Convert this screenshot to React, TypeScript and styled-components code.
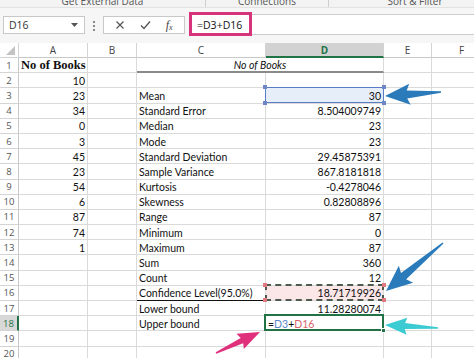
import React from 'react';
import styled, { createGlobalStyle, css } from 'styled-components';

const Global = createGlobalStyle`
  html, body { margin: 0; padding: 0; background: #fff; }
  body { width: 474px; height: 358px; overflow: hidden; }
`;

const Page = styled.div`
  position: relative;
  width: 474px;
  height: 358px;
  overflow: hidden;
  background: #fff;
  font-family: Lato, "Liberation Sans", sans-serif;
`;

const Ribbon = styled.div`
  display: flex;
  height: 7px;
  overflow: hidden;
  background: #f3f3f3;
  border-bottom: 1px solid #e2e2e2;
`;

const RibbonGroup = styled.div<{ $w: number; $sep?: boolean }>`
  flex: 0 0 ${(p) => p.$w}px;
  display: flex;
  justify-content: center;
  align-items: flex-end;
  font-family: "Open Sans", "Liberation Sans", sans-serif;
  font-size: 10px;
  line-height: 12px;
  color: #555;
  white-space: nowrap;
  ${(p) => p.$sep && css`border-left: 1px solid #cfcfcf;`}
`;

const Toolbar = styled.div`
  display: flex;
  align-items: flex-start;
  height: 35px;
  padding-top: 6px;
  box-sizing: border-box;
  background: #f6f6f6;
`;

const NameBox = styled.div`
  display: flex;
  align-items: center;
  justify-content: space-between;
  box-sizing: border-box;
  width: 82px;
  height: 18px;
  margin: 2px 0 0 3px;
  padding: 0 6px 0 5px;
  background: #fff;
  border: 1px solid #c8c8c8;
  font-family: "Open Sans", "Liberation Sans", sans-serif;
  font-size: 10.5px;
  color: #333;
`;

const Dots = styled.div`
  display: flex;
  flex-direction: column;
  gap: 2px;
  width: 18px;
  align-items: center;
  margin-top: 7px;
  span { width: 2px; height: 2px; background: #888; }
`;

const ButtonBox = styled.div`
  display: flex;
  align-items: center;
  justify-content: space-around;
  box-sizing: border-box;
  width: 82px;
  height: 18px;
  margin-top: 2px;
  padding: 0 4px;
  background: #fff;
  border: 1px solid #c8c8c8;
`;

const Fx = styled.span`
  font-family: "Liberation Serif", serif;
  font-style: italic;
  font-size: 12px;
  color: #444;
  sub { font-size: 8px; vertical-align: -1px; }
`;

const FormulaInput = styled.div`
  flex: 1;
  display: flex;
  align-items: center;
  box-sizing: border-box;
  height: 21px;
  margin-left: 5px;
  padding-left: 7px;
  background: #fff;
  border-top: 1px solid #cdcdcd;
  border-bottom: 1px solid #cdcdcd;
  font-family: "Open Sans", "Liberation Sans", sans-serif;
  font-size: 10.5px;
  color: #111;
`;

const Sheet = styled.div`
  display: grid;
  grid-template-columns: 19px 69px 49px 129px 118px 48px 60px;
  grid-template-rows: 15px;
  grid-auto-rows: 15.2px;
`;

const Corner = styled.div`
  position: relative;
  box-sizing: border-box;
  background: #fff;
  border-right: 1px solid #d4d4d4;
  border-bottom: 1px solid #d4d4d4;
  &::after {
    content: '';
    position: absolute;
    right: 3px;
    bottom: 2px;
    border-style: solid;
    border-width: 0 0 9px 9px;
    border-color: transparent transparent #c3c3c3 transparent;
  }
`;

const ColHead = styled.div<{ $active?: boolean }>`
  display: flex;
  align-items: center;
  justify-content: center;
  box-sizing: border-box;
  background: #fff;
  border-right: 1px solid #d4d4d4;
  border-bottom: 1px solid #c8c8c8;
  font-family: "Open Sans", "Liberation Sans", sans-serif;
  font-size: 10px;
  color: #444;
  ${(p) =>
    p.$active &&
    css`
      background: #d2d2d2;
      color: #217346;
      font-weight: 700;
      border-bottom: 2px solid #217346;
    `}
`;

const RowHead = styled.div<{ $active?: boolean }>`
  display: flex;
  align-items: center;
  justify-content: center;
  box-sizing: border-box;
  background: #fff;
  border-right: 1px solid #c8c8c8;
  border-bottom: 1px solid #d4d4d4;
  font-family: "Open Sans", "Liberation Sans", sans-serif;
  font-size: 9.5px;
  color: #555;
  ${(p) =>
    p.$active &&
    css`
      background: #d8d8d8;
      color: #217346;
      border-right: 2px solid #217346;
    `}
`;

const Cell = styled.div<{ $align?: 'left' | 'right' | 'center' }>`
  position: relative;
  display: flex;
  align-items: center;
  justify-content: ${(p) => (p.$align === 'right' ? 'flex-end' : p.$align === 'center' ? 'center' : 'flex-start')};
  box-sizing: border-box;
  padding: 1px 2px 0 2px;
  border-right: 1px solid #dadada;
  border-bottom: 1px solid #dadada;
  font-size: 10.5px;
  color: #111;
  white-space: nowrap;
`;

const TitleCell = styled(Cell)`
  font-family: "Liberation Serif", serif;
  font-weight: 700;
  font-size: 12.5px;
  overflow: visible;
`;

const MergedTitle = styled(Cell)`
  grid-column: span 2;
  font-style: italic;
  border-bottom: 2px solid #8a8a8a;
`;

const UnderlinedCell = styled(Cell)`
  border-bottom: 1px solid #111;
`;

const RefCell = styled(Cell)`
  background: #e6eef9;
  &::after {
    content: '';
    position: absolute;
    inset: -1px -1px 0 -1px;
    border: 1px solid #5a7cc4;
  }
`;

const MarqueeCell = styled(Cell)`
  background: #fbe6e8;
  &::after {
    content: '';
    position: absolute;
    inset: -2px -1px -1px -1px;
    border: 2px dashed #4f5a4f;
  }
`;

const ActiveCell = styled(Cell)`
  &::after {
    content: '';
    position: absolute;
    inset: -2px -1px -1px -2px;
    border: 2px solid #217346;
  }
`;

const Handle = styled.span<{ $color: string; $pos: 'tl' | 'tr' | 'bl' | 'br' }>`
  position: absolute;
  z-index: 2;
  width: 4px;
  height: 4px;
  background: ${(p) => p.$color};
  ${(p) => (p.$pos[0] === 't' ? 'top: -3px;' : 'bottom: -2px;')}
  ${(p) => (p.$pos[1] === 'l' ? 'left: -3px;' : 'right: -3px;')}
`;

const FillHandle = styled.span`
  position: absolute;
  z-index: 2;
  right: -3px;
  bottom: -3px;
  width: 5px;
  height: 5px;
  background: #217346;
  border: 1px solid #fff;
  box-sizing: border-box;
`;

const RefA = styled.span`color: #5b86cc;`;
const RefB = styled.span`color: #d9636c;`;

const Highlight = styled.div`
  position: absolute;
  left: 189px;
  top: 12px;
  width: 63px;
  height: 24px;
  box-sizing: border-box;
  border: 3px solid #d6337a;
  z-index: 5;
`;

const Overlay = styled.svg`
  position: absolute;
  left: 0;
  top: 0;
  width: 474px;
  height: 358px;
  pointer-events: none;
  z-index: 6;
`;

type P = [number, number];
function arrowPath(tip: P, tail: P, headLen: number, headW: number, shaftHead: number, shaftTail: number, notch: number) {
  const dx = tail[0] - tip[0];
  const dy = tail[1] - tip[1];
  const L = Math.hypot(dx, dy);
  const ux = dx / L;
  const uy = dy / L;
  const nx = -uy;
  const ny = ux;
  const pt = (a: number, b: number) => [tip[0] + ux * a + nx * b, tip[1] + uy * a + ny * b];
  const pts = [
    pt(0, 0),
    pt(headLen, headW / 2),
    pt(headLen - notch, shaftHead / 2),
    pt(L, shaftTail / 2),
    pt(L, -shaftTail / 2),
    pt(headLen - notch, -shaftHead / 2),
    pt(headLen, -headW / 2),
  ];
  return 'M' + pts.map((p) => p[0].toFixed(1) + ',' + p[1].toFixed(1)).join('L') + 'Z';
}

const colA: Record<number, string> = {
  2: '10', 3: '23', 4: '34', 5: '0', 6: '3', 7: '45', 8: '23', 9: '54', 10: '6', 11: '87', 12: '74', 13: '1',
};
const labels = [
  'Mean', 'Standard Error', 'Median', 'Mode', 'Standard Deviation', 'Sample Variance', 'Kurtosis', 'Skewness',
  'Range', 'Minimum', 'Maximum', 'Sum', 'Count', 'Confidence Level(95.0%)', 'Lower bound', 'Upper bound',
];
const values = [
  '30', '8.504009749', '23', '23', '29.45875391', '867.8181818', '-0.4278046', '0.82808896',
  '87', '0', '87', '360', '12', '18.71719926', '11.28280074',
];

function Row({ r }: { r: number }) {
  const label = r >= 3 ? labels[r - 3] : undefined;
  const value = r >= 3 && r <= 17 ? values[r - 3] : undefined;
  const cells: React.ReactNode[] = [];
  cells.push(<RowHead key="h" $active={r === 18}>{r}</RowHead>);
  if (r === 1) {
    cells.push(<TitleCell key="a">No of Books</TitleCell>);
    cells.push(<Cell key="b" />);
    cells.push(<MergedTitle key="cd" $align="center">No of Books</MergedTitle>);
  } else {
    cells.push(<Cell key="a" $align="right">{colA[r] ?? ''}</Cell>);
    cells.push(<Cell key="b" />);
    if (r === 16) cells.push(<UnderlinedCell key="c">{label}</UnderlinedCell>);
    else cells.push(<Cell key="c">{label ?? ''}</Cell>);
    if (r === 3) {
      cells.push(
        <RefCell key="d" $align="right">
          {value}
          <Handle $color="#6f86c6" $pos="tl" />
          <Handle $color="#6f86c6" $pos="tr" />
          <Handle $color="#6f86c6" $pos="bl" />
          <Handle $color="#6f86c6" $pos="br" />
        </RefCell>,
      );
    } else if (r === 16) {
      cells.push(
        <MarqueeCell key="d" $align="right">
          {value}
          <Handle $color="#e07a80" $pos="tl" />
          <Handle $color="#e07a80" $pos="tr" />
          <Handle $color="#e07a80" $pos="bl" />
          <Handle $color="#e07a80" $pos="br" />
        </MarqueeCell>,
      );
    } else if (r === 18) {
      cells.push(
        <ActiveCell key="d">
          =<RefA>D3</RefA>+<RefB>D16</RefB>
          <FillHandle />
        </ActiveCell>,
      );
    } else {
      cells.push(<Cell key="d" $align="right">{value ?? ''}</Cell>);
    }
  }
  cells.push(<Cell key="e" />);
  cells.push(<Cell key="f" />);
  return <>{cells}</>;
}

export default function App() {
  const rows = Array.from({ length: 20 }, (_, i) => i + 1);
  return (
    <Page>
      <Global />
      <Ribbon>
        <RibbonGroup $w={205}>Get External Data</RibbonGroup>
        <RibbonGroup $w={122} $sep>Connections</RibbonGroup>
        <RibbonGroup $w={172} $sep>Sort &amp; Filter</RibbonGroup>
      </Ribbon>
      <Toolbar>
        <NameBox>
          <span>D16</span>
          <svg width="7" height="4" viewBox="0 0 7 4"><path d="M0 0H7L3.5 4Z" fill="#555" /></svg>
        </NameBox>
        <Dots><span /><span /><span /></Dots>
        <ButtonBox>
          <svg width="10" height="10" viewBox="0 0 10 10"><path d="M1.5 1.5L8.5 8.5M8.5 1.5L1.5 8.5" stroke="#555" strokeWidth="1.2" /></svg>
          <svg width="11" height="10" viewBox="0 0 11 10"><path d="M1 5.5L4 8.5L10 1.5" stroke="#555" strokeWidth="1.3" fill="none" /></svg>
          <Fx>f<sub>x</sub></Fx>
        </ButtonBox>
        <FormulaInput>=D3+D16</FormulaInput>
      </Toolbar>
      <Sheet>
        <Corner />
        {['A', 'B', 'C', 'D', 'E', 'F'].map((c) => (
          <ColHead key={c} $active={c === 'D'}>{c}</ColHead>
        ))}
        {rows.map((r) => (
          <Row key={r} r={r} />
        ))}
      </Sheet>
      <Highlight />
      <Overlay viewBox="0 0 474 358">
        <path d={arrowPath([385, 96], [441, 92], 25, 21, 8, 1.5, 3)} fill="#2b7bbb" />
        <path d={arrowPath([386, 291], [443, 243], 26, 22, 8, 1.5, 3)} fill="#2b7bbb" />
        <path d={arrowPath([385, 325], [438, 328], 22, 17, 6, 1.5, 2)} fill="#3ccbd3" />
        <path d={arrowPath([260, 332], [216, 353], 22, 17, 6, 1.5, 2)} fill="#e0307c" />
      </Overlay>
    </Page>
  );
}
